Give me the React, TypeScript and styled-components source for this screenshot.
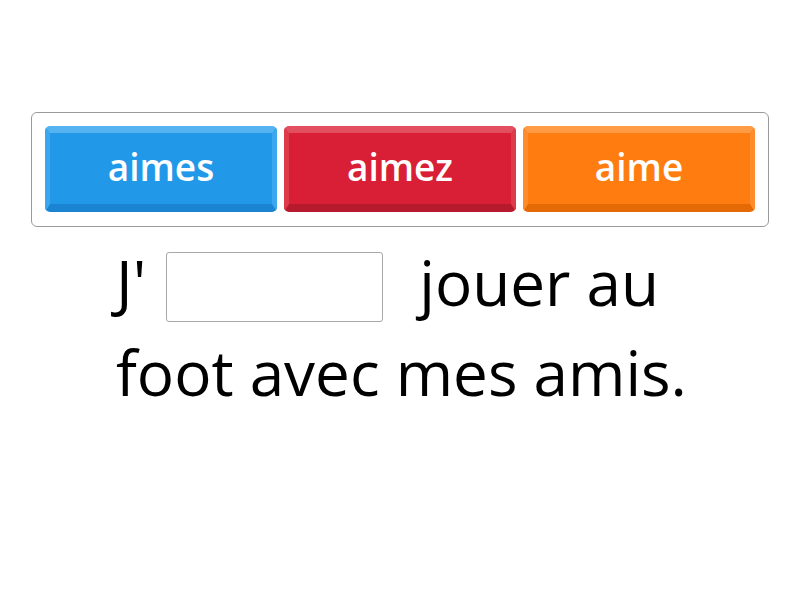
import React from "react";
import styled, { createGlobalStyle } from "styled-components";

const Global = createGlobalStyle`
  html, body { margin: 0; padding: 0; background: #fff; }
  body { font-family: "Open Sans", Lato, sans-serif; }
`;

const Page = styled.div`
  width: 800px;
  height: 600px;
  display: flex;
  flex-direction: column;
  align-items: center;
  padding-top: 112px;
  box-sizing: border-box;
`;

const Tray = styled.div`
  width: 738px;
  box-sizing: border-box;
  border: 1px solid #9a9a9a;
  border-radius: 6px;
  padding: 13px 13px 14px 13px;
  display: flex;
  gap: 7px;
`;

type Tone = { main: string; top: string; side: string; bottom: string };

const tones: Record<string, Tone> = {
  blue: { main: "#2298e8", top: "#55b3f1", side: "#3ca7ee", bottom: "#1a84d2" },
  red: { main: "#d81f35", top: "#e2505f", side: "#dd3a4a", bottom: "#b51a2d" },
  orange: { main: "#ff7c10", top: "#ff9a45", side: "#ff8c2c", bottom: "#e46a05" },
};

const Tile = styled.div<{ $tone: Tone }>`
  flex: 1;
  height: 86px;
  box-sizing: border-box;
  border-style: solid;
  border-width: 7px 5px 8px 5px;
  border-color: ${(p) => p.$tone.top} ${(p) => p.$tone.side} ${(p) => p.$tone.bottom} ${(p) => p.$tone.side};
  border-radius: 5px;
  background: ${(p) => p.$tone.main};
  color: #fff;
  font-size: 37px;
  font-weight: 600;
  display: flex;
  align-items: center;
  justify-content: center;
  padding-bottom: 4px;
`;

const Sentence = styled.div`
  width: 600px;
  margin-top: 25px;
  margin-left: 32px;
  font-size: 62px;
  color: #000;
  display: flex;
  flex-direction: column;
  gap: 20px;
`;

const Line = styled.div`
  display: flex;
  align-items: flex-start;
  white-space: nowrap;
  height: 70px;
  line-height: 60px;
`;

const Blank = styled.span`
  display: inline-block;
  width: 217px;
  height: 70px;
  box-sizing: border-box;
  border: 1px solid #a8a8a8;
  border-radius: 3px;
  margin: 0 36px 0 20px;
  background: #fff;
`;

export default function App() {
  return (
    <>
      <Global />
      <Page>
        <Tray>
          <Tile $tone={tones.blue}>aimes</Tile>
          <Tile $tone={tones.red}>aimez</Tile>
          <Tile $tone={tones.orange}>aime</Tile>
        </Tray>
        <Sentence>
          <Line>
            J'<Blank />jouer au
          </Line>
          <Line>foot avec mes amis.</Line>
        </Sentence>
      </Page>
    </>
  );
}
